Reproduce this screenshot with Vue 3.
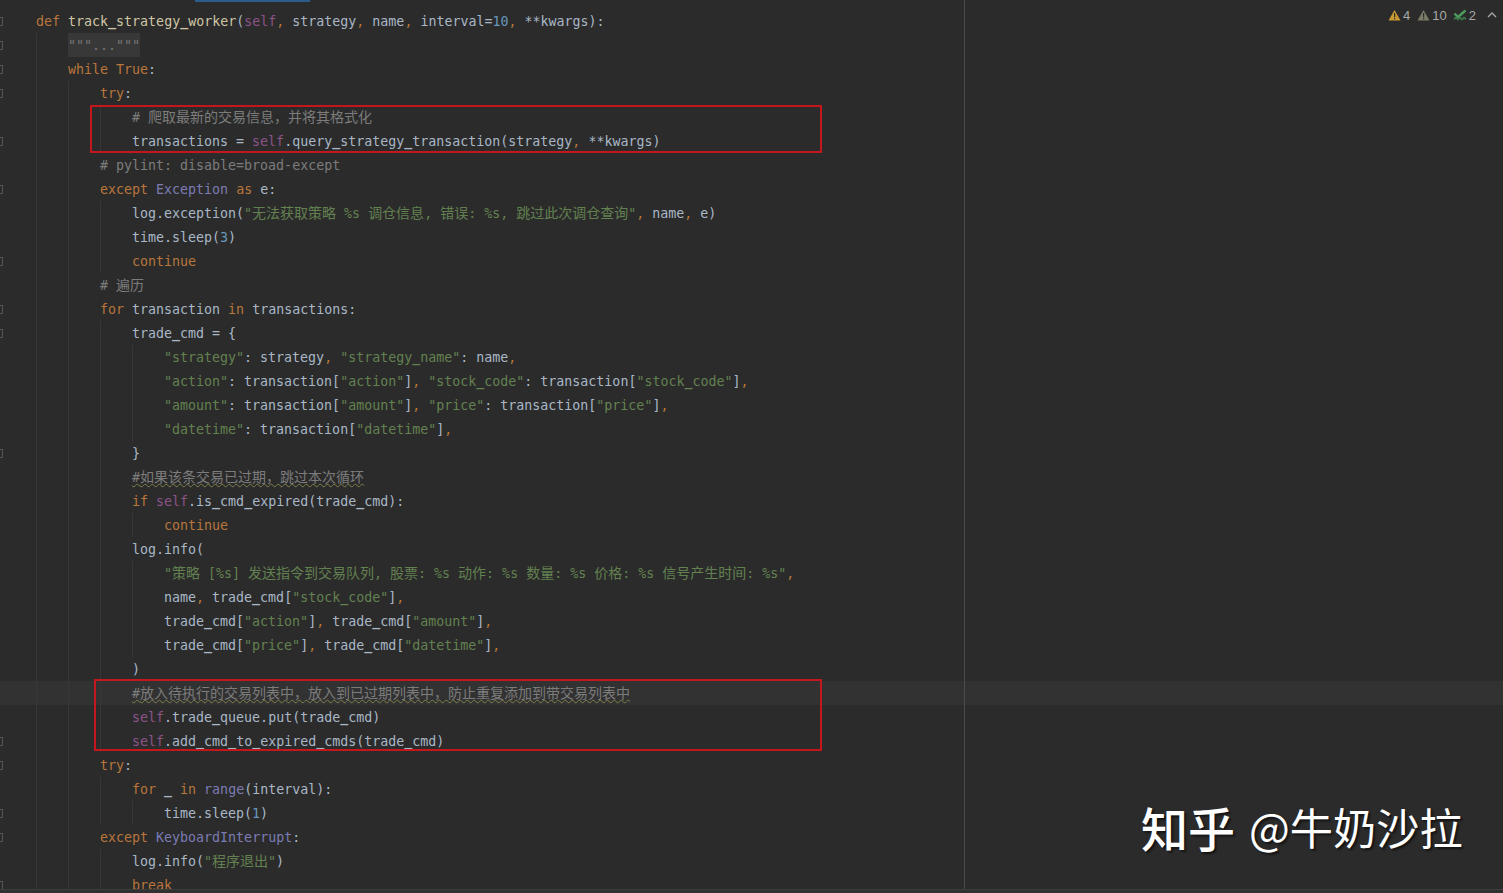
<script setup>
const rawLines = [
  [0, 'def track_strategy_worker(self, strategy, name, interval=10, **kwargs):', 1],
  [1, '@DOC', 1],
  [1, 'while True:', 1],
  [2, 'try:', 1],
  [3, '# 爬取最新的交易信息，并将其格式化', 0],
  [3, 'transactions = self.query_strategy_transaction(strategy, **kwargs)', 1],
  [2, '# pylint: disable=broad-except', 0],
  [2, 'except Exception as e:', 1],
  [3, 'log.exception("无法获取策略 %s 调仓信息, 错误: %s, 跳过此次调仓查询", name, e)', 0],
  [3, 'time.sleep(3)', 0],
  [3, 'continue', 1],
  [2, '# 遍历', 0],
  [2, 'for transaction in transactions:', 1],
  [3, 'trade_cmd = {', 1],
  [4, '"strategy": strategy, "strategy_name": name,', 0],
  [4, '"action": transaction["action"], "stock_code": transaction["stock_code"],', 0],
  [4, '"amount": transaction["amount"], "price": transaction["price"],', 0],
  [4, '"datetime": transaction["datetime"],', 0],
  [3, '}', 1],
  [3, '#如果该条交易已过期，跳过本次循环', 0, 'wavy'],
  [3, 'if self.is_cmd_expired(trade_cmd):', 0],
  [4, 'continue', 0],
  [3, 'log.info(', 0],
  [4, '"策略 [%s] 发送指令到交易队列, 股票: %s 动作: %s 数量: %s 价格: %s 信号产生时间: %s",', 0],
  [4, 'name, trade_cmd["stock_code"],', 0],
  [4, 'trade_cmd["action"], trade_cmd["amount"],', 0],
  [4, 'trade_cmd["price"], trade_cmd["datetime"],', 0],
  [3, ')', 0],
  [3, '#放入待执行的交易列表中，放入到已过期列表中，防止重复添加到带交易列表中', 0, 'wavy'],
  [3, 'self.trade_queue.put(trade_cmd)', 0],
  [3, 'self.add_cmd_to_expired_cmds(trade_cmd)', 1],
  [2, 'try:', 1],
  [3, 'for _ in range(interval):', 0],
  [4, 'time.sleep(1)', 1],
  [2, 'except KeyboardInterrupt:', 1],
  [3, 'log.info("程序退出")', 0],
  [3, 'break', 1],
]

const tokenRe = /("[^"]*"|#.*$|\b(?:def|while|True|try|except|as|continue|for|in|if|break)\b|\bself\b|\b(?:Exception|KeyboardInterrupt|range)\b|\btrack_strategy_worker\b|\b\d+\b|,)/g

function classify(t) {
  if (t.startsWith('"')) return 'str'
  if (t.startsWith('#')) return 'com'
  if (t === 'self') return 'slf'
  if (t === ',') return 'kw'
  if (t === 'track_strategy_worker') return 'fn'
  if (/^\d+$/.test(t)) return 'num'
  if (/^(Exception|KeyboardInterrupt|range)$/.test(t)) return 'blt'
  return 'kw'
}

function segments(text) {
  return text.split(/([\u3000-\u9fff\uff00-\uffef]+|_)/).filter(Boolean).map((s) => ({
    text: s,
    kind: s === '_' ? 'us' : /[\u3000-\u9fff\uff00-\uffef]/.test(s) ? 'cjk' : '',
  }))
}

function tokenize(src) {
  if (src === '@DOC') return [{ cls: 'doc', segs: segments('"""..."""') }]
  const out = []
  let last = 0
  for (const m of src.matchAll(tokenRe)) {
    if (m.index > last) out.push({ cls: 'txt', segs: segments(src.slice(last, m.index)) })
    out.push({ cls: classify(m[0]), segs: segments(m[0]) })
    last = m.index + m[0].length
  }
  if (last < src.length) out.push({ cls: 'txt', segs: segments(src.slice(last)) })
  return out
}

const lines = rawLines.map(([indent, src, fold, extra], i) => ({
  id: i,
  indent,
  fold,
  wavy: extra === 'wavy',
  current: i === 28,
  tokens: tokenize(src),
}))
</script>

<template>
  <div class="editor">
    <div class="code">
      <div
        v-for="line in lines"
        :key="line.id"
        class="line"
        :class="{ current: line.current, wavy: line.wavy }"
      >
        <div class="gutter"><i v-if="line.fold" class="fold"></i></div>
        <div v-for="n in line.indent" :key="n" class="guide"></div>
        <div class="text">
          <span v-for="(tok, t) in line.tokens" :key="t" :class="tok.cls"><span
            v-for="(seg, s) in tok.segs"
            :key="s"
            :class="seg.kind"
          >{{ seg.text }}</span></span>
        </div>
      </div>
    </div>

    <div class="tab-mark"></div>
    <div class="margin-line"></div>

    <div class="inspect">
      <svg class="ico" viewBox="0 0 13 12" width="13" height="12">
        <path d="M6.5 1 12.5 11.5H.5Z" fill="#c79a32" />
        <path d="M6 4h1.2v4.2H6zM6 9h1.2v1.3H6z" fill="#2b2b2b" />
      </svg>
      <span class="n">4</span>
      <svg class="ico second" viewBox="0 0 13 12" width="13" height="12">
        <path d="M6.5 1 12.5 11.5H.5Z" fill="#7b7b68" />
        <path d="M6 4h1.2v4.2H6zM6 9h1.2v1.3H6z" fill="#2b2b2b" />
      </svg>
      <span class="n">10</span>
      <svg class="ico third" viewBox="0 0 14 12" width="14" height="12">
        <path d="M1.5 4.5 5 8l7.5-6.5" fill="none" stroke="#4f9a5d" stroke-width="2.4" />
        <path d="M1 10 3 8.5l2 2 2-2 2 2 2-2 2 1.5" fill="none" stroke="#3c7a49" stroke-width="1.6" />
      </svg>
      <span class="n">2</span>
      <svg class="caret" viewBox="0 0 10 6" width="10" height="6">
        <path d="M1 5 5 1l4 4" fill="none" stroke="#a8a8a8" stroke-width="1.3" />
      </svg>
    </div>

    <div class="box box-a"></div>
    <div class="box box-b"></div>

    <div class="watermark"><span class="brand">知乎</span><span class="author">@牛奶沙拉</span></div>
    <div class="bottom-strip"></div>
  </div>
</template>

<style>
html, body { margin: 0; background: #2b2b2b; overflow: hidden; }
</style>

<style scoped>
.editor {
  position: relative;
  width: 1503px;
  height: 893px;
  overflow: hidden;
  background: #2b2b2b;
  font-family: "DejaVu Sans Mono", "Noto Sans CJK SC", monospace;
  font-size: 13.3px;
  color: #a9b7c6;
}
.code { padding-top: 9px; }
.line { display: flex; height: 24px; white-space: pre; }
.line.current { background: #323232; }
.gutter { width: 36px; flex: none; display: flex; align-items: center; }
.fold {
  display: block;
  width: 3px;
  height: 9px;
  box-sizing: border-box;
  border: 1px solid #555;
  border-left: 0;
}
.guide { width: 32px; flex: none; box-sizing: border-box; border-left: 1px solid #373737; }
.text { line-height: 26px; }
.cjk { font-family: "Noto Sans CJK SC", sans-serif; font-size: 14px; line-height: 1; }
.us { font-weight: 700; }
.kw { color: #b9763c; }
.str { color: #638150; }
.com { color: #7c7c7c; }
.slf { color: #8c5288; }
.fn { color: #cfc5a5; }
.num { color: #6897bb; }
.blt { color: #7c7cb4; }
.doc {
  display: inline-block;
  height: 24px;
  vertical-align: top;
  color: #777;
  background: #383838;
}
.wavy .com {
  text-decoration: underline wavy #7f7f4e 1px;
  text-underline-offset: 1px;
}
.tab-mark {
  position: absolute;
  left: 195px;
  top: 0;
  width: 115px;
  height: 2px;
  background: #2c5c8c;
}
.margin-line {
  position: absolute;
  left: 964px;
  top: 0;
  bottom: 0;
  width: 1px;
  background: #4b4b4b;
}
.inspect {
  position: absolute;
  top: 8px;
  left: 1388px;
  display: flex;
  align-items: center;
  height: 14px;
  font-family: "Liberation Sans", sans-serif;
  font-size: 13px;
  color: #a9a9a9;
}
.ico { flex: none; }
.n { margin-left: 2px; }
.second { margin-left: 7px; }
.third { margin-left: 6px; }
.caret { margin-left: 11px; }
.box {
  position: absolute;
  box-sizing: border-box;
  border: 2px solid #c4161c;
}
.box-a { left: 90px; top: 105px; width: 732px; height: 48px; }
.box-b { left: 94px; top: 679px; width: 728px; height: 72px; }
.watermark {
  position: absolute;
  left: 1141px;
  top: 795px;
  display: flex;
  align-items: center;
  height: 62px;
  color: #fff;
  font-family: "Noto Sans CJK SC", sans-serif;
  text-shadow: 2px 2px 2px rgba(0, 0, 0, 0.55);
  white-space: nowrap;
}
.brand { font-size: 47px; font-weight: 500; width: 108px; }
.author { font-size: 43.2px; font-weight: 400; }
.bottom-strip {
  position: absolute;
  left: 0;
  right: 0;
  bottom: 0;
  height: 4px;
  background: #313131;
  border-top: 1px solid #3e3e3e;
  box-sizing: border-box;
}
</style>
